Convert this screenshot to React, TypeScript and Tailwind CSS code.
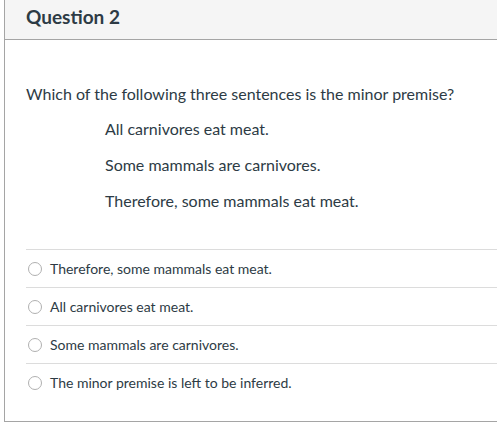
import React from "react";

const options = [
  "Therefore, some mammals eat meat.",
  "All carnivores eat meat.",
  "Some mammals are carnivores.",
  "The minor premise is left to be inferred.",
];

export default function App() {
  return (
    <div className="w-[497px] h-[434px] bg-white pl-[4px] text-[#2d3b45]" style={{ fontFamily: "Lato, 'Liberation Sans', sans-serif" }}>
      <div className="border-l border-b border-[#a5a5a5] h-[422px]">
        <div className="h-[40px] bg-[#f5f5f5] border-b border-[#a5a5a5] pl-[21px] pt-[5px]">
          <span className="text-[19px] font-bold leading-[24px]">Question 2</span>
        </div>
        <div className="pl-[21px] pt-[42px]">
          <p className="text-[16px] leading-[24px]">Which of the following three sentences is the minor premise?</p>
          <div className="pl-[79px] pt-[5px] text-[16px] flex flex-col">
            <p className="leading-[36px]">All carnivores eat meat.</p>
            <p className="leading-[36px]">Some mammals are carnivores.</p>
            <p className="leading-[36px]">Therefore, some mammals eat meat.</p>
          </div>
          <div className="mt-[30px]">
            {options.map((o) => (
              <div key={o} className="border-t border-[#dcdcdc] h-[38px] flex items-center gap-[8px] pl-[2px]">
                <span className="w-[14px] h-[14px] rounded-full border border-[#b0b0b0] bg-white" />
                <span className="text-[14px]">{o}</span>
              </div>
            ))}
          </div>
        </div>
      </div>
    </div>
  );
}
